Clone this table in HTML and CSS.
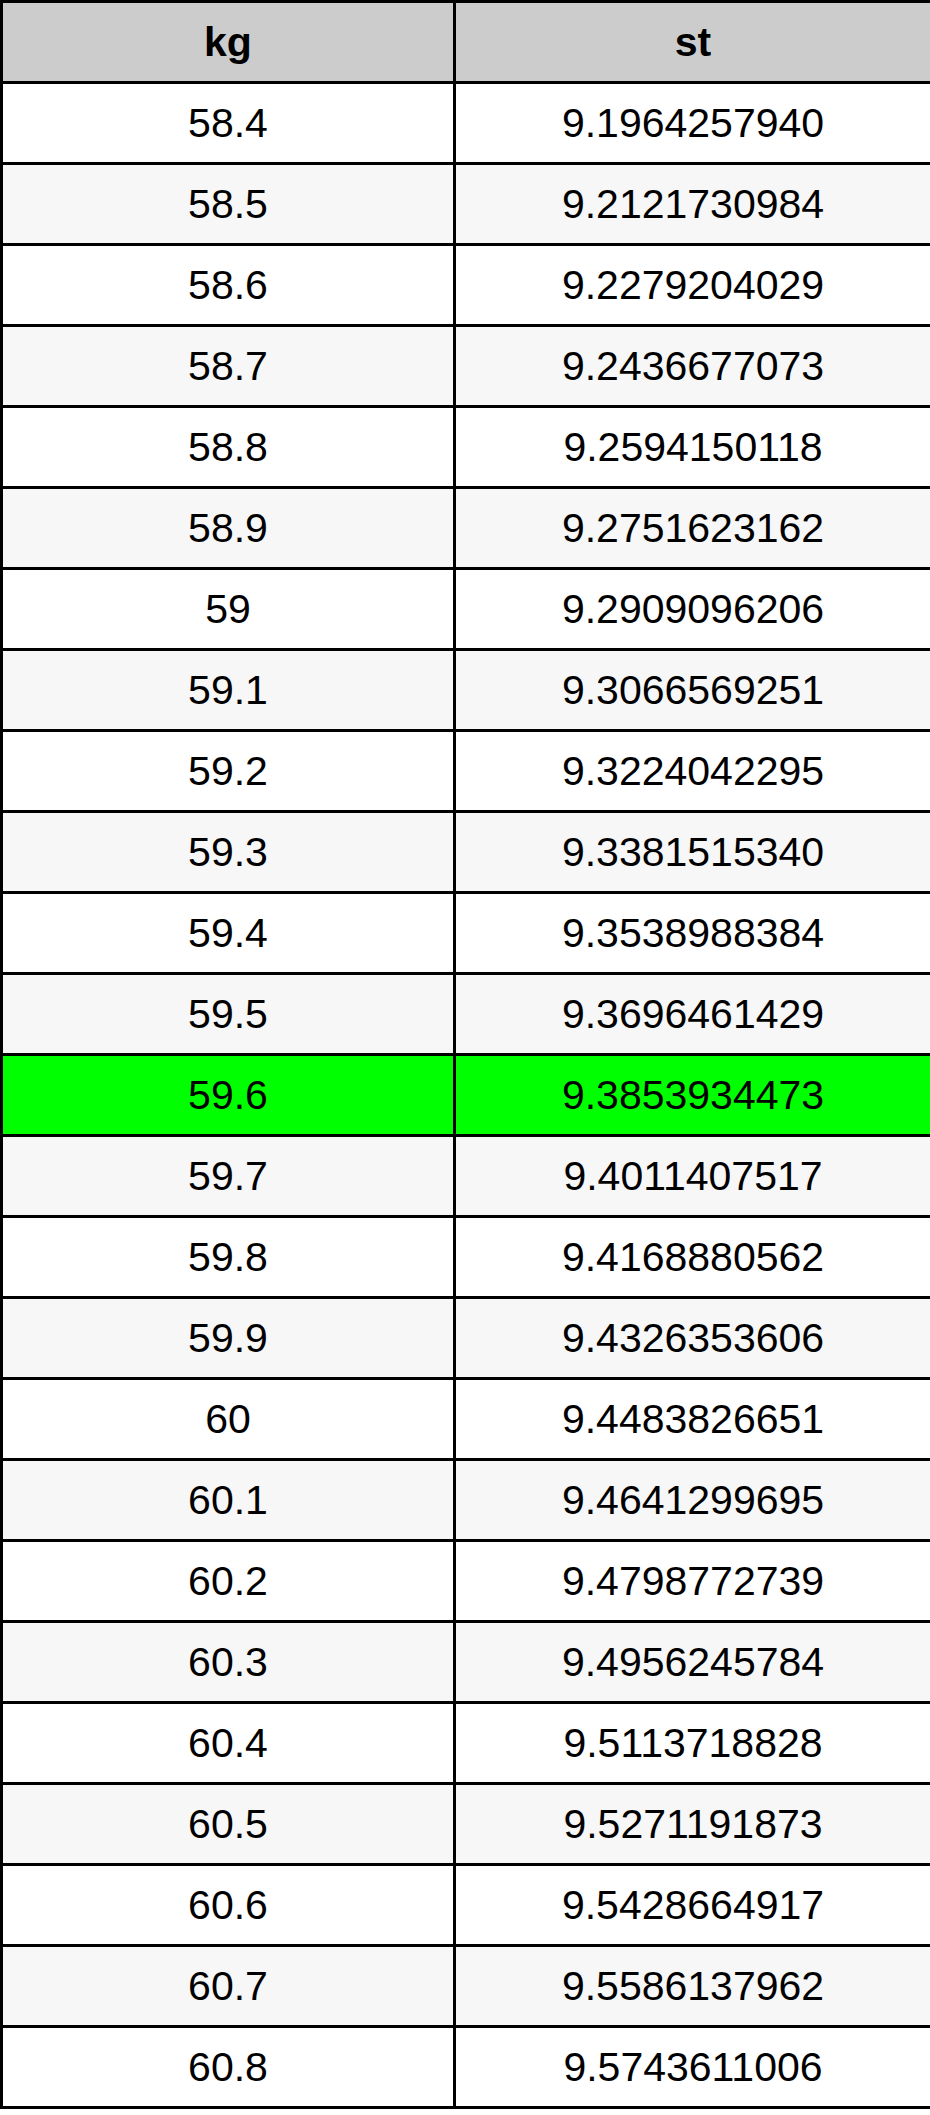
FILE: index.html
```html
<!DOCTYPE html>
<html>
<head>
<meta charset="utf-8">
<link rel="stylesheet" href="styles.css">
</head>
<body>
<table class="conv">
<colgroup><col class="c1"><col class="c2"></colgroup>
<thead>
<tr><th>kg</th><th>st</th></tr>
</thead>
<tbody>
<tr><td>58.4</td><td>9.1964257940</td></tr>
<tr class="alt"><td>58.5</td><td>9.2121730984</td></tr>
<tr><td>58.6</td><td>9.2279204029</td></tr>
<tr class="alt"><td>58.7</td><td>9.2436677073</td></tr>
<tr><td>58.8</td><td>9.2594150118</td></tr>
<tr class="alt"><td>58.9</td><td>9.2751623162</td></tr>
<tr><td>59</td><td>9.2909096206</td></tr>
<tr class="alt"><td>59.1</td><td>9.3066569251</td></tr>
<tr><td>59.2</td><td>9.3224042295</td></tr>
<tr class="alt"><td>59.3</td><td>9.3381515340</td></tr>
<tr><td>59.4</td><td>9.3538988384</td></tr>
<tr class="alt"><td>59.5</td><td>9.3696461429</td></tr>
<tr class="hl"><td>59.6</td><td>9.3853934473</td></tr>
<tr class="alt"><td>59.7</td><td>9.4011407517</td></tr>
<tr><td>59.8</td><td>9.4168880562</td></tr>
<tr class="alt"><td>59.9</td><td>9.4326353606</td></tr>
<tr><td>60</td><td>9.4483826651</td></tr>
<tr class="alt"><td>60.1</td><td>9.4641299695</td></tr>
<tr><td>60.2</td><td>9.4798772739</td></tr>
<tr class="alt"><td>60.3</td><td>9.4956245784</td></tr>
<tr><td>60.4</td><td>9.5113718828</td></tr>
<tr class="alt"><td>60.5</td><td>9.5271191873</td></tr>
<tr><td>60.6</td><td>9.5428664917</td></tr>
<tr class="alt"><td>60.7</td><td>9.5586137962</td></tr>
<tr><td>60.8</td><td>9.5743611006</td></tr>
</tbody>
</table>
</body>
</html>
```
FILE: styles.css
```css
html, body {
  margin: 0;
  padding: 0;
  background: #ffffff;
}
.conv {
  border-collapse: collapse;
  width: 930px;
  table-layout: fixed;
  font-family: "Liberation Sans", Arial, sans-serif;
  font-size: 41px;
  color: #000000;
}
.c1 { width: 453px; }
.c2 { width: 477px; }
.conv th,
.conv td {
  border: 3px solid #000000;
  padding: 0;
  height: 78px;
  line-height: 78px;
  text-align: center;
  vertical-align: middle;
}
.conv th {
  background: #cccccc;
  font-weight: bold;
}
.conv td {
  background: #ffffff;
  font-weight: normal;
}
.conv tr.alt td {
  background: #f7f7f7;
}
.conv tr.hl td {
  background: #00ff00;
}
```
